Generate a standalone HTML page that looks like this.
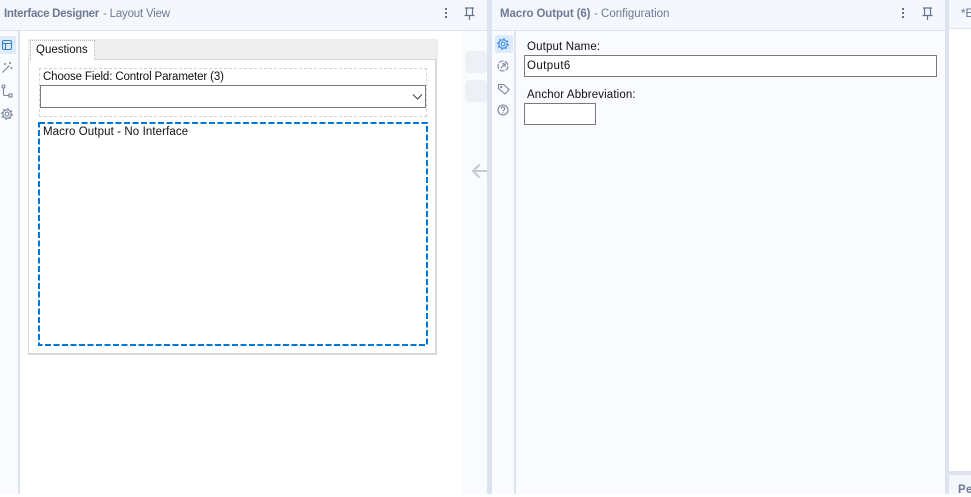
<!DOCTYPE html>
<html><head><meta charset="utf-8">
<style>
html,body{margin:0;padding:0}
body{width:971px;height:494px;position:relative;overflow:hidden;background:#fff;font-family:"Liberation Sans",sans-serif;font-size:11.5px;color:#111}
.a{position:absolute;box-sizing:border-box}
.t{position:absolute;white-space:nowrap;line-height:14px}
svg{position:absolute;overflow:visible}
.h{font-size:11.5px;font-weight:bold;color:#6f7a94}
.s{font-size:11.5px;color:#6f7a94}
</style></head><body>
<div class="a" style="left:0;top:0;width:487px;height:30px;background:#f4f7fc"></div>
<div class="a" style="left:0;top:30px;width:487px;height:1px;background:#dde4f0"></div>
<div class="a" style="left:0;top:31px;width:18px;height:463px;background:#f9fbfe"></div>
<div class="a" style="left:18px;top:31px;width:2px;height:463px;background:#dde4f0"></div>
<div class="a" style="left:462px;top:31px;width:25px;height:463px;background:#f9fbfe"></div>
<div class="a" style="left:487px;top:0;width:5px;height:494px;background:#dde4f0"></div>
<div class="a" style="left:492px;top:0;width:453px;height:30px;background:#f4f7fc"></div>
<div class="a" style="left:492px;top:30px;width:453px;height:1px;background:#dde4f0"></div>
<div class="a" style="left:492px;top:31px;width:22px;height:463px;background:#f9fbfe"></div>
<div class="a" style="left:514px;top:31px;width:2px;height:463px;background:#dde4f0"></div>
<div class="a" style="left:516px;top:31px;width:429px;height:463px;background:#f9fbfe"></div>
<div class="a" style="left:945px;top:0;width:4px;height:494px;background:#dde4f0"></div>
<div class="a" style="left:949px;top:0;width:22px;height:28px;background:#f4f7fc"></div>
<div class="a" style="left:949px;top:28px;width:22px;height:1px;background:#dde4f0"></div>
<div class="a" style="left:949px;top:471px;width:22px;height:4px;background:#dde4f0"></div>
<div class="a" style="left:949px;top:475px;width:22px;height:19px;background:#f4f7fc"></div>

<div class="t h" style="left:4px;top:7px;letter-spacing:-.3px">Interface Designer</div>
<div class="t s" style="left:103px;top:7px;letter-spacing:-.2px">- Layout View</div>
<div class="t h" style="left:500px;top:7px;letter-spacing:-.1px">Macro Output (6)</div>
<div class="t s" style="left:594px;top:7px">- Configuration</div>
<div class="t" style="left:961px;top:7px;color:#66718c">*E</div>
<div class="t h" style="left:958px;top:483px;letter-spacing:.3px">Pe</div>

<svg width="971" height="494" style="left:0;top:0" fill="none">
<g fill="#66718c">
<rect x="445" y="8" width="2" height="2"/><rect x="445" y="12" width="2" height="2"/><rect x="445" y="16" width="2" height="2"/>
<rect x="902" y="8" width="2" height="2"/><rect x="902" y="12" width="2" height="2"/><rect x="902" y="16" width="2" height="2"/>
</g>
<g stroke="#66718c" stroke-width="1.2">
<path d="M465 8h9M466.500 8v7.500M472.500 8v7.500M464.500 15.500h10M469.500 15.500v4.500"/>
<path d="M923 8h9M924.500 8v7.500M930.500 8v7.500M922.500 15.500h10M927.500 15.500v4.500"/>
</g>
<rect x="0" y="36" width="16" height="18" rx="2" fill="#dcebfb"/>
<rect x="495" y="35" width="18" height="18" rx="2" fill="#dcebfb"/>
<g stroke="#3a7fc4" stroke-width="1.100"><rect x="2.500" y="40.500" width="9" height="9" rx="1.500"/><path d="M2.500 43.500h9M5.500 43.500v6"/></g>
<g stroke="#7a849c" stroke-width="1.100">
<path d="M2.500 72.500l7-7"/><path d="M10 62v2M9 63h2M5 63v2M4 64h2M11.500 67v2M10.500 68h2"/>
<path d="M3.500 88v6a1.500 1.500 0 0 0 1.500 1.500h4"/><circle cx="3.500" cy="86.500" r="1.500"/><rect x="9" y="94" width="3" height="3"/>
<circle cx="7" cy="114" r="1.900"/><circle cx="7" cy="114" r="4.200"/><circle cx="7" cy="114" r="5.200" stroke-width="1.200" stroke-dasharray="1.800 2.280"/>
<circle cx="503" cy="66" r="5" stroke-dasharray="5 1.300"/><path d="M501 68l4-4M502 63.800h3.200v3.200"/>
<path d="M498.500 84.500h5l5.500 5-4 4.500-6.500-5.500z"/><circle cx="501.200" cy="87" r=".6"/>
<circle cx="503" cy="110" r="5"/><path d="M501.300 108.600a1.700 1.700 0 1 1 2.500 1.500c-.6.300-.8.600-.8 1.200M503 112.300v.9"/>
</g>
<g stroke="#3d8fe8" stroke-width="1.100"><circle cx="503" cy="44" r="1.900"/><circle cx="503" cy="44" r="4.200"/><circle cx="503" cy="44" r="5.200" stroke-width="1.200" stroke-dasharray="1.800 2.280"/></g>
<rect x="465" y="51" width="22" height="22" rx="4" fill="#eef0f5"/>
<rect x="465" y="80" width="22" height="22" rx="4" fill="#eef0f5"/>
<path d="M487 171h-14M479.500 164.500l-6.500 6.500 6.500 6.500" stroke="#c6cad2" stroke-width="2"/>
</svg>

<div class="a" style="left:28px;top:39px;width:410px;height:20px;background:#eee"></div>
<div class="a" style="left:28px;top:59px;width:409px;height:296px;background:#fff;border:1px solid #d8d8d8;border-width:1px 2px 2px 1px"></div>
<div class="a" style="left:30px;top:40px;width:65px;height:20px;background:#fff;border:1px dotted #b8b8b8;border-bottom:0"></div>
<div class="t" style="left:36px;top:43px">Questions</div>
<div class="a" style="left:39px;top:68px;width:388px;height:49px;border:1px dashed #d2d2d2"></div>
<div class="t" style="left:43px;top:70px;letter-spacing:-.13px">Choose Field: Control Parameter (3)</div>
<div class="a" style="left:40px;top:85px;width:386px;height:23px;background:#fff;border:1px solid #7a7a7a"></div>
<svg width="12" height="8" style="left:412px;top:93px" fill="none"><path d="M1 1.500l4.500 4.500 4.500-4.500" stroke="#444" stroke-width="1.100"/></svg>
<svg width="390" height="224" style="left:38px;top:122px" fill="none"><rect x="1" y="1" width="388" height="222" stroke="#0078d7" stroke-width="2" stroke-dasharray="6 2.500"/></svg>
<div class="t" style="left:43px;top:125px;letter-spacing:.1px">Macro Output - No Interface</div>

<div class="t" style="left:527px;top:40px;letter-spacing:.14px">Output Name:</div>
<div class="a" style="left:524px;top:55px;width:413px;height:22px;background:#fff;border:1px solid #7a7a7a"></div>
<div class="t" style="left:527px;top:59px;letter-spacing:.4px">Output6</div>
<div class="t" style="left:527px;top:88px;letter-spacing:.13px">Anchor Abbreviation:</div>
<div class="a" style="left:524px;top:103px;width:72px;height:22px;background:#fff;border:1px solid #7a7a7a"></div>
</body></html>
